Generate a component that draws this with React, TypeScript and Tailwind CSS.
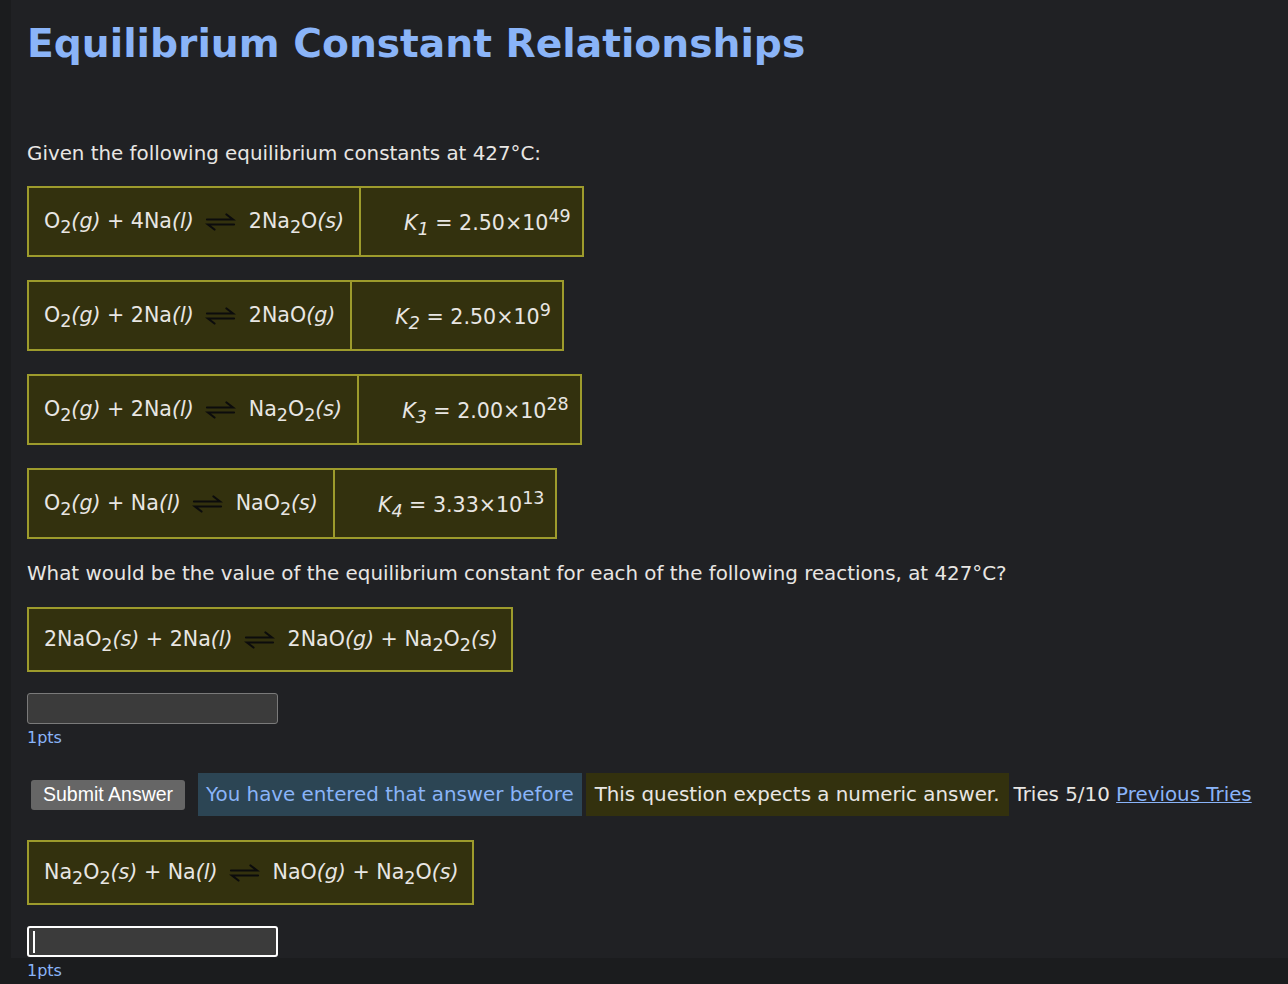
import React from 'react';

// Equilibrium constant question page (dark-reader style colours)

const FONT = { fontFamily: '"DejaVu Sans", Verdana, sans-serif' };

function Eq(): React.JSX.Element {
  return (
    <svg className="ml-[11px] mr-[13px] inline-block align-middle" width="31" height="24" viewBox="0 0 31 24">
      <path d="M2 9.5H28L21.5 4.5" fill="none" stroke="#0c0c0c" strokeWidth="2.2" strokeLinecap="round" />
      <path d="M29 14.5H3L9.5 19.5" fill="none" stroke="#0c0c0c" strokeWidth="2.2" strokeLinecap="round" />
    </svg>
  );
}

const I = ({ children }: { children: React.ReactNode }) => <i>{children}</i>;
const Sub = ({ children }: { children: React.ReactNode }) => (
  <sub className="bottom-auto top-[5px] text-[0.85em] leading-none">{children}</sub>
);
const Sup = ({ children }: { children: React.ReactNode }) => (
  <sup className="top-[-8px] text-[0.85em] leading-none">{children}</sup>
);

function Box({ children }: { children: React.ReactNode }): React.JSX.Element {
  return (
    <div className="inline-flex border-2 border-[#9d9b2c] bg-[#33310e] text-[20.6px] text-[#e8e6e3]">
      {children}
    </div>
  );
}

function GivenRow({ left, k }: { left: React.ReactNode; k: React.ReactNode }): React.JSX.Element {
  return (
    <div className="flex">
      <Box>
        <div className="flex h-[67px] items-center pl-[15px] pr-[15px]">{left}</div>
        <div className="flex h-[67px] items-center border-l-2 border-[#9d9b2c] pl-[43px] pr-[11px] pt-[4px]">{k}</div>
      </Box>
    </div>
  );
}

function Answer({ focused }: { focused?: boolean }): React.JSX.Element {
  return (
    <div
      className={
        focused
          ? 'flex h-[31px] w-[251px] items-center rounded-[3px] border-2 border-white bg-[#3b3b3b] pl-[4px]'
          : 'h-[31px] w-[251px] rounded-[3px] border border-[#7a7a7a] bg-[#3b3b3b]'
      }
    >
      {focused && <span className="h-[22px] w-[2px] bg-white" />}
    </div>
  );
}

export default function App(): React.JSX.Element {
  return (
    <div className="flex min-h-[984px] bg-[#1b1c1e]" style={FONT}>
      <div className="w-[11px] shrink-0" />
      <div className="flex-1">
        <main className="bg-[#202124] pb-[1px] pl-[16px] pt-[18px] text-[#e8e6e3]">
          <h1 className="text-[39.2px] font-bold leading-[52px] text-[#8ab4f8]">Equilibrium Constant Relationships</h1>

          <p className="mt-[71px] text-[19.85px] leading-[26px]">Given the following equilibrium constants at 427°C:</p>

          <div className="mt-[19px] flex flex-col gap-[23px]">
            <GivenRow
              left={<span>O<Sub>2</Sub><I>(g)</I> + 4Na<I>(l)</I><Eq />2Na<Sub>2</Sub>O<I>(s)</I></span>}
              k={<span><I>K<Sub>1</Sub></I> = 2.50×10<Sup>49</Sup></span>}
            />
            <GivenRow
              left={<span>O<Sub>2</Sub><I>(g)</I> + 2Na<I>(l)</I><Eq />2NaO<I>(g)</I></span>}
              k={<span><I>K<Sub>2</Sub></I> = 2.50×10<Sup>9</Sup></span>}
            />
            <GivenRow
              left={<span>O<Sub>2</Sub><I>(g)</I> + 2Na<I>(l)</I><Eq />Na<Sub>2</Sub>O<Sub>2</Sub><I>(s)</I></span>}
              k={<span><I>K<Sub>3</Sub></I> = 2.00×10<Sup>28</Sup></span>}
            />
            <GivenRow
              left={<span>O<Sub>2</Sub><I>(g)</I> + Na<I>(l)</I><Eq />NaO<Sub>2</Sub><I>(s)</I></span>}
              k={<span><I>K<Sub>4</Sub></I> = 3.33×10<Sup>13</Sup></span>}
            />
          </div>

          <p className="mt-[22px] text-[19.85px] leading-[26px]">
            What would be the value of the equilibrium constant for each of the following reactions, at 427°C?
          </p>

          <div className="mt-[20px]">
            <Box>
              <div className="flex h-[61px] items-center pl-[15px] pr-[13px]">
                <span>2NaO<Sub>2</Sub><I>(s)</I> + 2Na<I>(l)</I><Eq />2NaO<I>(g)</I> + Na<Sub>2</Sub>O<Sub>2</Sub><I>(s)</I></span>
              </div>
            </Box>
          </div>

          <div className="mt-[21px]"><Answer /></div>
          <div className="mt-[4px] text-[16px] leading-[20px] text-[#8ab4f8]">1pts</div>

          <div className="mt-[25px] flex items-center text-[19.85px]">
            <button
              className="ml-[4px] h-[30px] rounded-[3px] bg-[#666666] px-[12px] text-[19.5px] text-white"
              style={{ fontFamily: '"Liberation Sans", Arial, sans-serif' }}
            >
              Submit Answer
            </button>
            <span className="ml-[13px] flex h-[43px] items-center bg-[#2c4554] px-[8px] text-[#8ab4f8]">
              You have entered that answer before
            </span>
            <span className="ml-[4px] flex h-[43px] items-center bg-[#33310e] px-[9px]">
              This question expects a numeric answer.
            </span>
            <span className="ml-[5px]">
              Tries 5/10 <a className="text-[#8ab4f8] underline" href="#">Previous Tries</a>
            </span>
          </div>

          <div className="mt-[24px]">
            <Box>
              <div className="flex h-[61px] items-center pl-[15px] pr-[14px]">
                <span>Na<Sub>2</Sub>O<Sub>2</Sub><I>(s)</I> + Na<I>(l)</I><Eq />NaO<I>(g)</I> + Na<Sub>2</Sub>O<I>(s)</I></span>
              </div>
            </Box>
          </div>

          <div className="mt-[21px]"><Answer focused /></div>
        </main>
        <div className="pl-[16px] pt-[3px] text-[16px] leading-[20px] text-[#8ab4f8]">1pts</div>
      </div>
    </div>
  );
}
